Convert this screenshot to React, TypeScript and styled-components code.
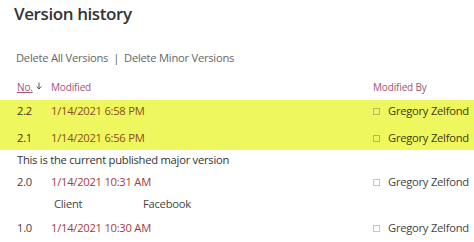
import React from "react";
import styled, { createGlobalStyle } from "styled-components";

const Global = createGlobalStyle`
  html, body { margin: 0; padding: 0; background: #fff; }
  body { font-family: "Open Sans", "Noto Sans", sans-serif; color: #444; }
`;

const Page = styled.div`
  width: 474px;
  height: 242px;
  overflow: hidden;
  display: flex;
  flex-direction: column;
`;

const Title = styled.h1`
  margin: 0;
  padding-left: 14px;
  height: 28px;
  line-height: 27px;
  font-size: 17px;
  font-weight: 600;
  letter-spacing: -0.4px;
  color: #333;
`;

const Actions = styled.div`
  margin-top: 21px;
  padding-left: 16px;
  font-size: 11.2px;
  letter-spacing: -0.25px;
  color: #666;
  height: 20px;
  line-height: 20px;
  display: flex;
  gap: 5px;
  white-space: nowrap;
`;

const Grid = styled.div`
  display: grid;
  grid-template-columns: 34px 322px 1fr;
  padding-left: 17px;
`;

const HeadCell = styled.div<{ $underline?: boolean }>`
  font-size: 10px;
  letter-spacing: -0.15px;
  color: #a1537a;
  height: 32px;
  padding-top: 11px;
  box-sizing: border-box;
  line-height: 16px;
  display: flex;
  align-items: flex-start;
  gap: 3px;
  white-space: nowrap;
  span { text-decoration: ${(p) => (p.$underline ? "underline" : "none")}; }
  svg { margin-top: 3px; }
`;

const Highlight = styled.div`
  grid-column: 1 / -1;
  margin-left: -17px;
  padding-left: 17px;
  background: #eff75e;
  display: grid;
  grid-template-columns: 34px 322px 1fr;
`;

const Cell = styled.div<{ $kind?: "num" | "date" | "name"; $hl?: boolean; $h?: number }>`
  font-size: 11.2px;
  letter-spacing: -0.25px;
  height: ${(p) => p.$h ?? 27}px;
  line-height: 18px;
  display: flex;
  align-items: flex-start;
  padding-top: 2px;
  box-sizing: border-box;
  white-space: nowrap;
  color: ${(p) =>
    p.$kind === "date"
      ? p.$hl
        ? "#8c4c20"
        : "#a33b3c"
      : p.$hl
      ? "#3b3b14"
      : "#444"};
`;

const Box = styled.span<{ $hl?: boolean }>`
  width: 5px;
  height: 5px;
  margin: 6px 8px 0 0;
  border: 1px solid ${(p) => (p.$hl ? "#b4b86c" : "#c6c6c6")};
  flex: none;
`;

const Note = styled.div`
  grid-column: 1 / -1;
  font-size: 11.2px;
  letter-spacing: -0.25px;
  color: #333;
  height: 21px;
  line-height: 18px;
  padding-top: 1px;
  box-sizing: border-box;
  white-space: nowrap;
`;

const Meta = styled.div`
  grid-column: 2 / -1;
  display: flex;
  font-size: 11.2px;
  letter-spacing: -0.25px;
  color: #444;
  height: 24px;
  line-height: 18px;
  padding-top: 2px;
  box-sizing: border-box;
  span:first-child { width: 92px; padding-left: 3px; box-sizing: border-box; }
`;

type Row = { no: string; date: string; by: string };

const VersionRow = ({ r, hl, h }: { r: Row; hl?: boolean; h?: number }) => (
  <>
    <Cell $kind="num" $hl={hl} $h={h}>{r.no}</Cell>
    <Cell $kind="date" $hl={hl} $h={h}>{r.date}</Cell>
    <Cell $kind="name" $hl={hl} $h={h}>
      <Box $hl={hl} />
      {r.by}
    </Cell>
  </>
);

export default function App() {
  return (
    <Page>
      <Global />
      <Title>Version history</Title>
      <Actions>
        <span>Delete All Versions</span>
        <span>|</span>
        <span>Delete Minor Versions</span>
      </Actions>
      <Grid>
        <HeadCell $underline>
          <span>No.</span>
          <svg width="6" height="8" viewBox="0 0 6 8">
            <path d="M3 0.5v6.5M0.8 4.6L3 7l2.2-2.4" stroke="#555" strokeWidth="1" fill="none" />
          </svg>
        </HeadCell>
        <HeadCell>Modified</HeadCell>
        <HeadCell>Modified By</HeadCell>
        <Highlight>
          <VersionRow hl h={27} r={{ no: "2.2", date: "1/14/2021 6:58 PM", by: "Gregory Zelfond" }} />
          <VersionRow hl h={23} r={{ no: "2.1", date: "1/14/2021 6:56 PM", by: "Gregory Zelfond" }} />
        </Highlight>
        <Note>This is the current published major version</Note>
        <VersionRow h={22} r={{ no: "2.0", date: "1/14/2021 10:31 AM", by: "Gregory Zelfond" }} />
        <Meta>
          <span>Client</span>
          <span>Facebook</span>
        </Meta>
        <VersionRow r={{ no: "1.0", date: "1/14/2021 10:30 AM", by: "Gregory Zelfond" }} />
      </Grid>
    </Page>
  );
}
